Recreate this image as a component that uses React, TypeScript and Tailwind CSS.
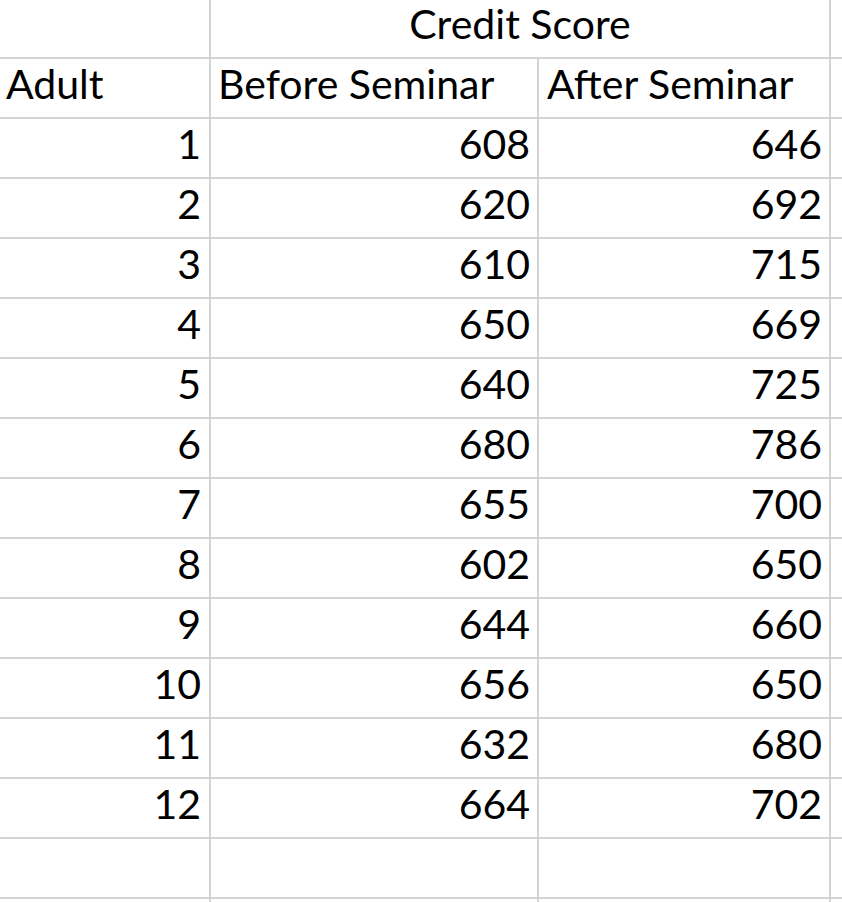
const rows = [
  [1, 608, 646],
  [2, 620, 692],
  [3, 610, 715],
  [4, 650, 669],
  [5, 640, 725],
  [6, 680, 786],
  [7, 655, 700],
  [8, 602, 650],
  [9, 644, 660],
  [10, 656, 650],
  [11, 632, 680],
  [12, 664, 702],
];

const cell = "bg-white flex items-end";

export default function App() {
  return (
    <div
      className="w-[842px] h-[902px] overflow-hidden bg-[#d4d4d4] grid grid-cols-[209px_326px_290px_1fr] grid-rows-[57px_repeat(14,58px)_1fr] gap-[2px] text-black text-[41px] leading-[44px]"
      style={{ fontFamily: "Lato, 'Noto Sans', sans-serif" }}
    >
      <div className={cell} />
      <div className={`${cell} col-span-2 justify-center pb-[11px]`}>Credit Score</div>
      <div className={cell} />

      <div className={`${cell} pl-[6px] pb-[11px]`}>Adult</div>
      <div className={`${cell} pl-[7px] pb-[11px]`}>Before Seminar</div>
      <div className={`${cell} pl-[8px] pb-[11px]`}>After Seminar</div>
      <div className={cell} />

      {rows.map(([a, b, c]) => (
        <div key={a} className="contents">
          <div className={`${cell} justify-end pr-[8px] pb-[11px]`}>{a}</div>
          <div className={`${cell} justify-end pr-[7px] pb-[11px]`}>{b}</div>
          <div className={`${cell} justify-end pr-[7px] pb-[11px]`}>{c}</div>
          <div className={cell} />
        </div>
      ))}

      <div className={cell} />
      <div className={cell} />
      <div className={cell} />
      <div className={cell} />

      <div className={cell} />
      <div className={cell} />
      <div className={cell} />
      <div className={cell} />
    </div>
  );
}
